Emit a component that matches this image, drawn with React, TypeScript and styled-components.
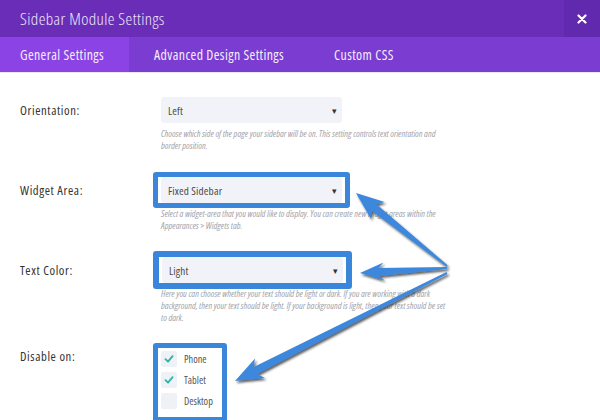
import React from "react";
import styled, { createGlobalStyle } from "styled-components";

const GlobalStyle = createGlobalStyle`
  html, body {
    margin: 0;
    padding: 0;
    background: #ffffff;
  }
  body {
    font-family: "Open Sans", "Liberation Sans", sans-serif;
    font-stretch: 75%;
  }
`;

type Pt = [number, number];

// builds a tapered arrow polygon from a source point to a tip
const arrowPoints = (s: Pt, t: Pt, headLen: number, headW: number) => {
    const dx = t[0] - s[0];
    const dy = t[1] - s[1];
    const len = Math.hypot(dx, dy);
    const ux = dx / len;
    const uy = dy / len;
    const nx = -uy;
    const ny = ux;
    const bx = t[0] - ux * headLen;
    const by = t[1] - uy * headLen;
    const wx = bx - ux * 5;
    const wy = by - uy * 5;
    const w0 = 1;
    const w1 = 4;
    const pts: Pt[] = [
        [s[0] + nx * w0, s[1] + ny * w0],
        [bx + nx * w1, by + ny * w1],
        [wx + nx * headW, wy + ny * headW],
        t,
        [wx - nx * headW, wy - ny * headW],
        [bx - nx * w1, by - ny * w1],
        [s[0] - nx * w0, s[1] - ny * w0],
    ];
    return pts.map((p) => `${p[0].toFixed(1)},${p[1].toFixed(1)}`).join(" ");
};

const arrows = [
    { s: [447, 266] as Pt, t: [356, 193] as Pt, head: 23, w: 11 },
    { s: [447, 268] as Pt, t: [360, 273] as Pt, head: 19, w: 9 },
    { s: [447, 273] as Pt, t: [235, 381] as Pt, head: 23, w: 11 },
];

const rows = [
    {
        label: "Orientation:",
        value: "Left",
        mark: 0,
        help: [
            "Choose which side of the page your sidebar will be on. This setting controls text orientation and",
            "border position.",
        ],
    },
    {
        label: "Widget Area:",
        value: "Fixed Sidebar",
        mark: 5,
        help: [
            "Select a widget-area that you would like to display. You can create new widget areas within the",
            "Appearances > Widgets tab.",
        ],
    },
    {
        label: "Text Color:",
        value: "Light",
        mark: 6,
        help: [
            "Here you can choose whether your text should be light or dark. If you are working with a dark",
            "background, then your text should be light. If your background is light, then your text should be set",
            "to dark.",
        ],
    },
];

const devices = [
    { name: "Phone", checked: true },
    { name: "Tablet", checked: true },
    { name: "Desktop", checked: false },
];

const SelectBox = ({ value }: { value: string }) => (
    <Select>
        <span>{value}</span>
        <Caret>▾</Caret>
    </Select>
);

export default function App() {
    return (
        <>
            <GlobalStyle />
            <Modal>
                <Header>
                    <Title>Sidebar Module Settings</Title>
                    <CloseButton>
                        <svg width="10" height="10" viewBox="0 0 10 10">
                            <path d="M1.5 1.5 L8.5 8.5 M8.5 1.5 L1.5 8.5" stroke="#ffffff" strokeWidth="2.2" strokeLinecap="round" />
                        </svg>
                    </CloseButton>
                </Header>
                <Tabs>
                    <Tab $active>General Settings</Tab>
                    <Tab>Advanced Design Settings</Tab>
                    <Tab>Custom CSS</Tab>
                </Tabs>
                <Content>
                    {rows.map((row) => (
                        <Row key={row.label}>
                            <Label>{row.label}</Label>
                            <Field>
                                {row.mark ? (
                                    <Highlight $thick={row.mark}>
                                        <SelectBox value={row.value} />
                                    </Highlight>
                                ) : (
                                    <SelectBox value={row.value} />
                                )}
                                <Help>
                                    {row.help.map((line) => (
                                        <div key={line}>{line}</div>
                                    ))}
                                </Help>
                            </Field>
                        </Row>
                    ))}
                    <CheckRow>
                        <Label $top>Disable on:</Label>
                        <CheckHighlight>
                            {devices.map((d) => (
                                <CheckItem key={d.name}>
                                    <Check>
                                        {d.checked && (
                                            <svg width="10" height="10" viewBox="0 0 10 10">
                                                <path d="M1.5 5.2 L4 7.6 L8.6 2.2" fill="none" stroke="#2fb3a3" strokeWidth="1.8" strokeLinecap="round" strokeLinejoin="round" />
                                            </svg>
                                        )}
                                    </Check>
                                    <CheckText>{d.name}</CheckText>
                                </CheckItem>
                            ))}
                        </CheckHighlight>
                    </CheckRow>
                </Content>
                <Arrows width="600" height="420" viewBox="0 0 600 420">
                    <defs>
                        <filter id="shadow" x="-20%" y="-20%" width="140%" height="140%">
                            <feDropShadow dx="1.5" dy="2" stdDeviation="1.2" floodColor="#1b1b1b" floodOpacity="0.7" />
                        </filter>
                    </defs>
                    {arrows.map((a, i) => (
                        <polygon key={i} points={arrowPoints(a.s, a.t, a.head, a.w)} fill="#3d88dc" filter="url(#shadow)" />
                    ))}
                </Arrows>
            </Modal>
        </>
    );
}

const Modal = styled.div`
    position: relative;
    width: 600px;
    height: 420px;
    overflow: hidden;
    background: #ffffff;
`;

const Header = styled.div`
    display: flex;
    align-items: stretch;
    height: 37px;
    background: #6a2db8;
`;

const Title = styled.div`
    flex: 1;
    display: flex;
    align-items: center;
    padding-left: 20px;
    font-size: 17px;
    font-weight: 300;
    letter-spacing: 0.4px;
    color: #efe7fa;
`;

const CloseButton = styled.div`
    width: 36px;
    display: flex;
    align-items: center;
    justify-content: center;
    background: #6129ad;
`;

const Tabs = styled.div`
    display: flex;
    height: 35px;
    background: #7b3dd1;
    border-bottom: 1px solid #ece6f6;
`;

const Tab = styled.div<{ $active?: boolean }>`
    display: flex;
    align-items: center;
    padding: 0 25px;
    font-size: 13.8px;
    font-weight: 500;
    letter-spacing: 0.4px;
    color: #f4eefc;
    background: ${(p) => (p.$active ? "#8c43e6" : "transparent")};
    &:first-child {
        padding-left: 20px;
    }
`;

const Content = styled.div`
    display: flex;
    flex-direction: column;
    gap: 25px;
    padding: 24px 0 0 20px;
`;

const Row = styled.div`
    display: grid;
    grid-template-columns: 141px 1fr;
    align-items: start;
`;

const CheckRow = styled.div`
    display: grid;
    grid-template-columns: 141px 1fr;
    align-items: start;
    margin-top: -6px;
`;

const Label = styled.div<{ $top?: boolean }>`
    height: ${(p) => (p.$top ? "16px" : "26px")};
    line-height: ${(p) => (p.$top ? "16px" : "26px")};
    margin-top: ${(p) => (p.$top ? "5px" : "0")};
    font-size: 12.7px;
    font-weight: 500;
    letter-spacing: 0.6px;
    color: #333333;
`;

const Field = styled.div`
    display: flex;
    flex-direction: column;
    align-items: flex-start;
`;

const Highlight = styled.div<{ $thick: number }>`
    border: ${(p) => p.$thick}px solid #3a86db;
    border-radius: 3px;
    padding: 0 3px;
    margin: ${(p) => -p.$thick}px -8px;
    background: #ffffff;
`;

const Select = styled.div`
    width: 181px;
    height: 26px;
    box-sizing: border-box;
    display: flex;
    align-items: center;
    justify-content: space-between;
    padding: 0 5px 0 7px;
    background: #f1f3f8;
    border-radius: 3px;
    font-size: 11.2px;
    letter-spacing: 0.15px;
    color: #4a4a4a;
`;

const Caret = styled.span`
    font-size: 9px;
    color: #333333;
`;

const Help = styled.div`
    margin-top: 5px;
    font-size: 9.2px;
    font-style: italic;
    line-height: 12px;
    color: #a3a3ab;
    white-space: nowrap;
`;

const CheckHighlight = styled.div`
    display: inline-flex;
    flex-direction: column;
    gap: 5px;
    justify-self: start;
    margin-left: -8px;
    padding: 3px 9px 8px 3px;
    border: 5px solid #3a86db;
    border-radius: 3px;
    background: #ffffff;
`;

const CheckItem = styled.div`
    display: flex;
    align-items: center;
    gap: 7px;
`;

const Check = styled.div`
    width: 16px;
    height: 16px;
    display: flex;
    align-items: center;
    justify-content: center;
    background: #eef1f6;
    border-radius: 2px;
`;

const CheckText = styled.span`
    font-size: 10.3px;
    color: #555555;
`;

const Arrows = styled.svg`
    position: absolute;
    left: 0;
    top: 0;
    pointer-events: none;
`;
